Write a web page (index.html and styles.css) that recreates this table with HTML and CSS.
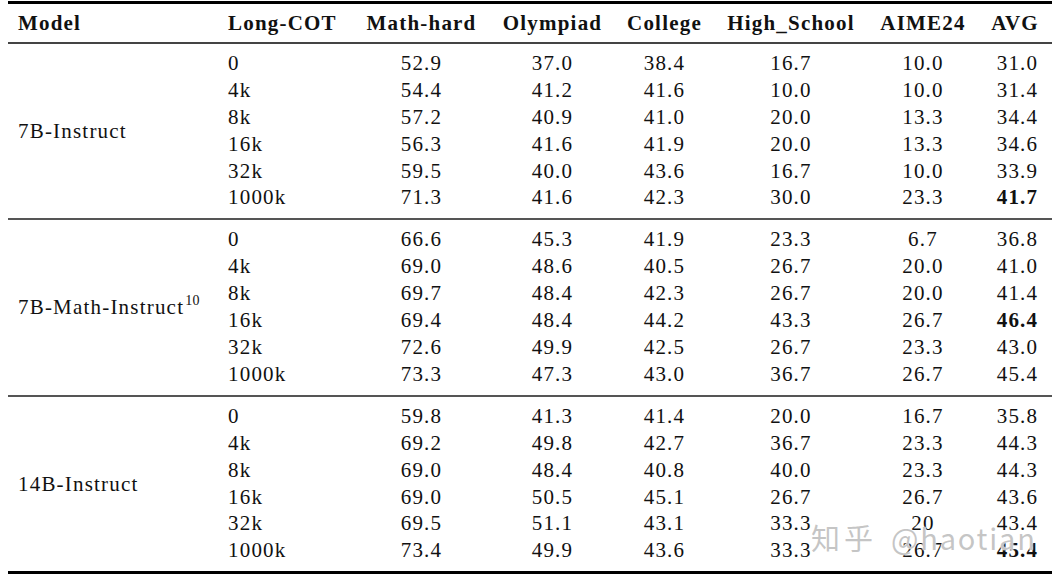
FILE: index.html
```html
<!DOCTYPE html>
<html lang="en">
<head>
<meta charset="utf-8">
<title>Long-COT results</title>
<link rel="stylesheet" href="styles.css">
</head>
<body>
<div class="page">
  <table class="results">
    <colgroup>
      <col class="c-model"><col class="c-cot"><col class="c-math"><col class="c-oly">
      <col class="c-col"><col class="c-hs"><col class="c-aime"><col class="c-avg">
    </colgroup>
    <thead>
      <tr>
        <th class="left">Model</th>
        <th class="left">Long-COT</th>
        <th>Math-hard</th>
        <th>Olympiad</th>
        <th>College</th>
        <th>High_School</th>
        <th>AIME24</th>
        <th>AVG</th>
      </tr>
    </thead>
    <tbody>
      <tr class="first"><td class="model" rowspan="6">7B-Instruct</td><td class="left">0</td><td>52.9</td><td>37.0</td><td>38.4</td><td>16.7</td><td>10.0</td><td class="avg">31.0</td></tr>
      <tr><td class="left">4k</td><td>54.4</td><td>41.2</td><td>41.6</td><td>10.0</td><td>10.0</td><td class="avg">31.4</td></tr>
      <tr><td class="left">8k</td><td>57.2</td><td>40.9</td><td>41.0</td><td>20.0</td><td>13.3</td><td class="avg">34.4</td></tr>
      <tr><td class="left">16k</td><td>56.3</td><td>41.6</td><td>41.9</td><td>20.0</td><td>13.3</td><td class="avg">34.6</td></tr>
      <tr><td class="left">32k</td><td>59.5</td><td>40.0</td><td>43.6</td><td>16.7</td><td>10.0</td><td class="avg">33.9</td></tr>
      <tr class="last"><td class="left">1000k</td><td>71.3</td><td>41.6</td><td>42.3</td><td>30.0</td><td>23.3</td><td class="avg best">41.7</td></tr>
    </tbody>
    <tbody>
      <tr class="first"><td class="model" rowspan="6">7B-Math-Instruct<sup>10</sup></td><td class="left">0</td><td>66.6</td><td>45.3</td><td>41.9</td><td>23.3</td><td>6.7</td><td class="avg">36.8</td></tr>
      <tr><td class="left">4k</td><td>69.0</td><td>48.6</td><td>40.5</td><td>26.7</td><td>20.0</td><td class="avg">41.0</td></tr>
      <tr><td class="left">8k</td><td>69.7</td><td>48.4</td><td>42.3</td><td>26.7</td><td>20.0</td><td class="avg">41.4</td></tr>
      <tr><td class="left">16k</td><td>69.4</td><td>48.4</td><td>44.2</td><td>43.3</td><td>26.7</td><td class="avg best">46.4</td></tr>
      <tr><td class="left">32k</td><td>72.6</td><td>49.9</td><td>42.5</td><td>26.7</td><td>23.3</td><td class="avg">43.0</td></tr>
      <tr class="last"><td class="left">1000k</td><td>73.3</td><td>47.3</td><td>43.0</td><td>36.7</td><td>26.7</td><td class="avg">45.4</td></tr>
    </tbody>
    <tbody>
      <tr class="first"><td class="model" rowspan="6">14B-Instruct</td><td class="left">0</td><td>59.8</td><td>41.3</td><td>41.4</td><td>20.0</td><td>16.7</td><td class="avg">35.8</td></tr>
      <tr><td class="left">4k</td><td>69.2</td><td>49.8</td><td>42.7</td><td>36.7</td><td>23.3</td><td class="avg">44.3</td></tr>
      <tr><td class="left">8k</td><td>69.0</td><td>48.4</td><td>40.8</td><td>40.0</td><td>23.3</td><td class="avg">44.3</td></tr>
      <tr><td class="left">16k</td><td>69.0</td><td>50.5</td><td>45.1</td><td>26.7</td><td>26.7</td><td class="avg">43.6</td></tr>
      <tr><td class="left">32k</td><td>69.5</td><td>51.1</td><td>43.1</td><td>33.3</td><td>20</td><td class="avg">43.4</td></tr>
      <tr class="last"><td class="left">1000k</td><td>73.4</td><td>49.9</td><td>43.6</td><td>33.3</td><td>26.7</td><td class="avg best">45.4</td></tr>
    </tbody>
  </table>
  <div class="watermark"><span class="wm-site">知乎</span><span class="wm-user">@haotian</span></div>
</div>
</body>
</html>
```

FILE: styles.css
```css
html, body {
  margin: 0;
  padding: 0;
  background: #fff;
}

.page {
  position: relative;
  width: 1058px;
  height: 586px;
  padding: 1px 0 0 8px;
  box-sizing: border-box;
  font-family: "Liberation Serif", "Times New Roman", serif;
  color: #111;
}

.results {
  width: 1044px;
  table-layout: fixed;
  border-collapse: separate;
  border-spacing: 0;
  font-size: 21px;
  letter-spacing: 1.2px;
  border-top: 3px solid #000;
  border-bottom: 3px solid #000;
}

.c-model { width: 210px; }
.c-cot { width: 135px; }
.c-math { width: 137px; }
.c-oly { width: 125px; }
.c-col { width: 99px; }
.c-hs { width: 154px; }
.c-aime { width: 110px; }
.c-avg { width: 74px; }

.results th,
.results td {
  padding: 0;
  text-align: center;
  line-height: 26.9px;
  white-space: nowrap;
}

.results th {
  font-weight: bold;
  padding-top: 6px;
  padding-bottom: 5px;
  border-bottom: 2px solid #444;
}

.results .left {
  text-align: left;
  padding-left: 10px;
}

.results .model {
  text-align: left;
  padding-left: 10px;
  vertical-align: middle;
}

.results tbody + tbody .model {
  border-top: 2px solid #555;
}

.results tbody + tbody tr.first td {
  border-top: 2px solid #555;
}

.results tr.first td {
  padding-top: 6px;
}

.results tr.last td {
  padding-bottom: 7px;
}

.results tr.first td.model {
  padding-top: 0;
}

.results td.avg {
  padding-left: 5px;
}

.results .best {
  font-weight: bold;
}

.results sup {
  font-size: 14px;
  letter-spacing: 0.4px;
  line-height: 0;
  vertical-align: 9px;
  margin-left: 1px;
}

.watermark {
  position: absolute;
  left: 811px;
  top: 519px;
  display: flex;
  align-items: baseline;
  gap: 14px;
  font-family: "Noto Sans CJK SC", "Noto Sans", sans-serif;
  font-size: 29px;
  line-height: 36px;
  color: rgba(175, 175, 175, 0.72);
  text-shadow: 0 0 2px #fff, 0 0 1px #fff;
  white-space: nowrap;
}

.wm-site {
  letter-spacing: 4px;
}

.wm-user {
  letter-spacing: 1.8px;
}
```
